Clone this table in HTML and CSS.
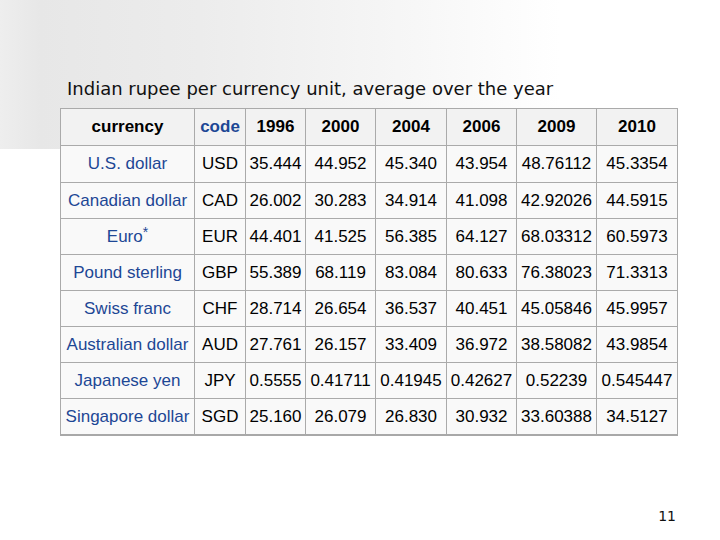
FILE: index.html
```html
<!DOCTYPE html>
<html>
<head>
<meta charset="utf-8">
<link rel="stylesheet" href="styles.css">
</head>
<body>
<div class="slide">
  <div class="title">Indian rupee per currency unit, average over the year</div>
  <table class="rates">
    <colgroup>
      <col class="c-cur"><col class="c-code"><col class="c-60"><col class="c-70"><col class="c-71"><col class="c-70"><col class="c-80"><col class="c-81">
    </colgroup>
    <thead>
      <tr><th>currency</th><th class="link">code</th><th>1996</th><th>2000</th><th>2004</th><th>2006</th><th>2009</th><th>2010</th></tr>
    </thead>
    <tbody>
      <tr class="first"><td class="link">U.S. dollar</td><td>USD</td><td>35.444</td><td>44.952</td><td>45.340</td><td>43.954</td><td>48.76112</td><td>45.3354</td></tr>
      <tr><td class="link">Canadian dollar</td><td>CAD</td><td>26.002</td><td>30.283</td><td>34.914</td><td>41.098</td><td>42.92026</td><td>44.5915</td></tr>
      <tr><td class="link">Euro<sup>*</sup></td><td>EUR</td><td>44.401</td><td>41.525</td><td>56.385</td><td>64.127</td><td>68.03312</td><td>60.5973</td></tr>
      <tr><td class="link">Pound sterling</td><td>GBP</td><td>55.389</td><td>68.119</td><td>83.084</td><td>80.633</td><td>76.38023</td><td>71.3313</td></tr>
      <tr><td class="link">Swiss franc</td><td>CHF</td><td>28.714</td><td>26.654</td><td>36.537</td><td>40.451</td><td>45.05846</td><td>45.9957</td></tr>
      <tr><td class="link">Australian dollar</td><td>AUD</td><td>27.761</td><td>26.157</td><td>33.409</td><td>36.972</td><td>38.58082</td><td>43.9854</td></tr>
      <tr><td class="link">Japanese yen</td><td>JPY</td><td>0.5555</td><td>0.41711</td><td>0.41945</td><td>0.42627</td><td>0.52239</td><td>0.545447</td></tr>
      <tr><td class="link">Singapore dollar</td><td>SGD</td><td>25.160</td><td>26.079</td><td>26.830</td><td>30.932</td><td>33.60388</td><td>34.5127</td></tr>
    </tbody>
  </table>
  <div class="pagenum">11</div>
</div>
</body>
</html>
```
FILE: styles.css
```css
html, body {
  margin: 0;
  padding: 0;
}
body {
  width: 720px;
  height: 540px;
  overflow: hidden;
  background-color: #ffffff;
  background-image: linear-gradient(to right, #eeeeee 0px, #e7e7e7 40px, #ececec 200px, #f5f5f5 380px, #ffffff 560px);
  background-size: 720px 149px;
  background-repeat: no-repeat;
}
.slide {
  height: 540px;
  display: flex;
  flex-direction: column;
  padding-left: 60px;
  box-sizing: border-box;
}
.title {
  margin-top: 77px;
  margin-left: 7px;
  font-family: "DejaVu Sans", sans-serif;
  font-size: 18px;
  line-height: 24px;
  height: 31px;
  color: #111111;
  white-space: nowrap;
}
.rates {
  border-collapse: collapse;
  table-layout: fixed;
  width: 617px;
  font-family: "Liberation Sans", Arial, sans-serif;
  font-size: 17px;
  color: #000000;
  background: #f9f9f9;
  border: 1px solid #aaaaaa;
  border-bottom: 2px solid #a8a8a8;
}
.c-cur { width: 134px; }
.c-code { width: 51px; }
.c-60 { width: 60px; }
.c-70 { width: 70px; }
.c-71 { width: 71px; }
.c-80 { width: 80px; }
.c-81 { width: 81px; }
.rates th, .rates td {
  border: 1px solid #aaaaaa;
  padding: 0;
  text-align: center;
  white-space: nowrap;
  overflow: hidden;
}
.rates th {
  background: #f2f2f2;
  font-weight: bold;
  height: 36px;
}
.rates td {
  height: 35px;
}
.rates tr.first td {
  height: 36px;
}
.link {
  color: #1d4795;
}
.rates sup {
  font-size: 14px;
  line-height: 0;
  vertical-align: 5px;
}
.pagenum {
  margin-top: auto;
  margin-bottom: 16px;
  margin-right: 44px;
  align-self: flex-end;
  font-family: "DejaVu Sans", sans-serif;
  font-size: 14px;
  color: #111111;
}
```
